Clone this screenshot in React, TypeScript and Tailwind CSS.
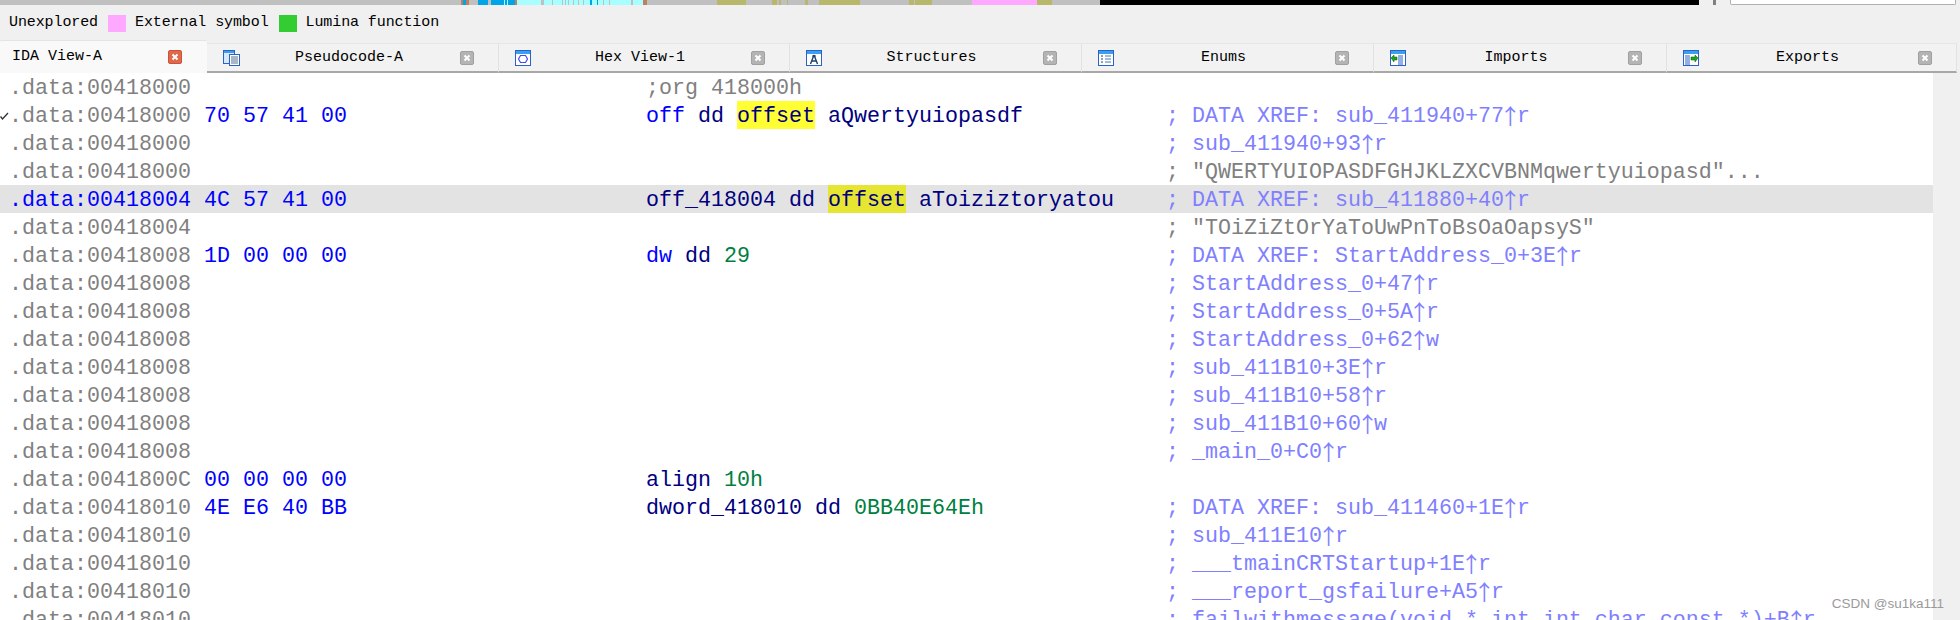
import React from "react";

type Tok = [string, string];
type Row = { addr: string; bytes?: string; asm?: Tok[]; note?: Tok[]; active?: boolean; check?: boolean };

const KEY = "text-[#0000ff]";
const NAVY = "text-[#000080]";
const NUM = "text-[#008040]";
const GRAY = "text-[#808080]";
const CMT = "text-[#8080ff]";

const xref = (s: string): Tok[] => [["; " + s, CMT]];
const str = (s: string): Tok[] => [["; " + s, GRAY]];

const rows: Row[] = [
  { addr: "00418000", asm: [[";org 418000h", GRAY]] },
  {
    addr: "00418000",
    bytes: "70 57 41 00",
    check: true,
    asm: [["off", KEY], [" dd ", NAVY], ["offset", "HL"], [" aQwertyuiopasdf", NAVY]],
    note: xref("DATA XREF: sub_411940+77↑r"),
  },
  { addr: "00418000", note: xref("sub_411940+93↑r") },
  { addr: "00418000", note: str('"QWERTYUIOPASDFGHJKLZXCVBNMqwertyuiopasd"...') },
  {
    addr: "00418004",
    bytes: "4C 57 41 00",
    active: true,
    asm: [["off_418004 dd ", NAVY], ["offset", "HL"], [" aToiziztoryatou", NAVY]],
    note: xref("DATA XREF: sub_411880+40↑r"),
  },
  { addr: "00418004", note: str('"TOiZiZtOrYaToUwPnToBsOaOapsyS"') },
  {
    addr: "00418008",
    bytes: "1D 00 00 00",
    asm: [["dw", KEY], [" dd ", NAVY], ["29", NUM]],
    note: xref("DATA XREF: StartAddress_0+3E↑r"),
  },
  { addr: "00418008", note: xref("StartAddress_0+47↑r") },
  { addr: "00418008", note: xref("StartAddress_0+5A↑r") },
  { addr: "00418008", note: xref("StartAddress_0+62↑w") },
  { addr: "00418008", note: xref("sub_411B10+3E↑r") },
  { addr: "00418008", note: xref("sub_411B10+58↑r") },
  { addr: "00418008", note: xref("sub_411B10+60↑w") },
  { addr: "00418008", note: xref("_main_0+C0↑r") },
  { addr: "0041800C", bytes: "00 00 00 00", asm: [["align ", NAVY], ["10h", NUM]] },
  {
    addr: "00418010",
    bytes: "4E E6 40 BB",
    asm: [["dword_418010 dd ", NAVY], ["0BB40E64Eh", NUM]],
    note: xref("DATA XREF: sub_411460+1E↑r"),
  },
  { addr: "00418010", note: xref("sub_411E10↑r") },
  { addr: "00418010", note: xref("___tmainCRTStartup+1E↑r") },
  { addr: "00418010", note: xref("___report_gsfailure+A5↑r") },
  { addr: "00418010", note: xref("failwithmessage(void *,int,int,char const *)+B↑r") },
];

// navigator band: [x where the segment ends, colour]
const G = "#c0c0c0";
const B = "#00a5e8";
const C = "#a8ffff";
const O = "#b8b86c";
const P = "#ffa8ff";
const R = "#c08060";
const stops: [number, string][] = [
  [461, G], [463, R], [466, B], [469, R], [478, G], [488, B], [491, G], [504, B], [505, C], [507, B], [508, C], [515, B], [517, R],
  [541, C], [544, G], [552, C], [553, G], [562, C], [563, G], [565, C], [566, G], [568, C], [569, G], [573, C], [574, G],
  [578, C], [579, G], [583, C], [584, G], [590, C], [592, B], [597, C], [598, B], [603, C], [604, G], [609, C], [610, G],
  [631, C], [633, G], [643, C], [647, R],
  [717, G], [746, O], [772, G], [777, O], [779, G], [781, O], [787, G], [788, O], [805, G], [808, O], [819, G], [860, O],
  [909, G], [914, O], [915, G], [932, O], [972, G], [1037, P], [1052, O], [1100, G], [1699, "#000000"],
];

const Win = ({ children }: { children: React.ReactNode }) => (
  <svg width="16" height="16" viewBox="0 0 16 16" className="shrink-0">
    <rect x="0.5" y="0.5" width="15" height="15" fill="#fff" stroke="#2a62c8" />
    <rect x="1" y="1" width="14" height="3" fill="#39a0ee" />
    {children}
  </svg>
);

const tabIcons: Record<string, React.ReactNode> = {
  pseudo: (
    <svg width="17" height="16" viewBox="0 0 17 16" className="shrink-0">
      <rect x="0.5" y="0.5" width="11" height="13" fill="#d6e8fb" stroke="#2a62c8" />
      <rect x="1" y="1" width="10" height="2" fill="#39a0ee" />
      <rect x="6.5" y="4.5" width="10" height="11" fill="#fff" stroke="#2a62c8" />
      <path d="M8 7h7M8 9h7M8 11h7M8 13h7" stroke="#50708c" />
    </svg>
  ),
  hex: (
    <Win>
      <path d="M5.5 5.5h5l2 3.5-2 3.5h-5l-2-3.5z" fill="none" stroke="#4848f0" strokeWidth="1.2" />
    </Win>
  ),
  struct: (
    <Win>
      <path d="M8 5l-3.5 9M8 5l3.5 9M5.5 11h5" fill="none" stroke="#20406a" strokeWidth="1.4" />
      <rect x="6.5" y="5" width="3" height="2" fill="#20406a" />
    </Win>
  ),
  enums: (
    <Win>
      <path d="M3 6h2M3 9h2M3 12h2" stroke="#20406a" strokeWidth="1.2" />
      <path d="M7 6h6M7 9h6M7 12h6" stroke="#4878b8" />
    </Win>
  ),
  imports: (
    <Win>
      <path d="M8 6h5M8 8h5M8 10h5M8 12h5M8 14h5" stroke="#2a62c8" />
      <path d="M1 8l3-3v2h3v3H4v2z" fill="#18a818" stroke="#0a500a" strokeWidth="0.5" />
    </Win>
  ),
  exports: (
    <Win>
      <path d="M2 6h5M2 8h5M2 10h5M2 12h5M2 14h5" stroke="#2a62c8" />
      <path d="M15 8l-3-3v2H8v3h4v2z" fill="#18a818" stroke="#0a500a" strokeWidth="0.5" />
    </Win>
  ),
};

const tabs = [
  { name: "Pseudocode-A", icon: "pseudo", w: "w-[292px]" },
  { name: "Hex View-1", icon: "hex", w: "w-[291px]" },
  { name: "Structures", icon: "struct", w: "w-[292px]" },
  { name: "Enums", icon: "enums", w: "w-[292px]" },
  { name: "Imports", icon: "imports", w: "w-[293px]" },
  { name: "Exports", icon: "exports", w: "w-[290px]" },
];

const CloseBtn = ({ on }: { on?: boolean }) => (
  <div
    className={
      "flex h-[14px] w-[14px] shrink-0 items-center justify-center rounded-[2px] border " +
      (on ? "border-[#c8553a] bg-[#e0694c]" : "border-[#a0a0a0] bg-[#b4b4b4]")
    }
  >
    <svg width="8" height="8" viewBox="0 0 8 8">
      <path d="M1.5 1.5l5 5M6.5 1.5l-5 5" stroke="#fff" strokeWidth="2" />
    </svg>
  </div>
);

const Swatch = ({ color }: { color: string }) => <div className={"ml-[10px] mr-[9px] h-[17px] w-[18px] " + color} />;

// the arrow of a cross reference is tall and thin, Liberation Mono's is too small
const Note = ({ text, cls }: { text: string; cls: string }) => {
  const i = text.indexOf("↑");
  if (i < 0) return <span className={cls}>{text}</span>;
  return (
    <span className={cls}>
      {text.slice(0, i)}
      <span className="inline-flex h-[28px] w-[13px] justify-center overflow-visible align-top font-['Noto_Sans_CJK_SC',sans-serif] leading-[28px]">
        ↑
      </span>
      {text.slice(i + 1)}
    </span>
  );
};

export default function App() {
  return (
    <div className="relative flex h-[620px] w-[1960px] flex-col overflow-hidden bg-[#f0f0f0] font-['Liberation_Mono',monospace] text-black">
      {/* navigator band */}
      <div className="flex h-[5px] shrink-0">
        <div className="flex w-[1699px]">
          {stops.map(([end, c], i) => (
            <div key={i} style={{ width: end - (i ? stops[i - 1][0] : 0), backgroundColor: c }} />
          ))}
        </div>
        <div className="ml-[14px] h-[5px] w-[3px] bg-[#808080]" />
        <div className="ml-[14px] h-[5px] w-[226px] rounded-b-[2px] border-x border-b border-[#b0b0b0] bg-white" />
      </div>

      {/* legend */}
      <div className="flex h-[35px] shrink-0 items-center pt-[1px] pl-[9px] text-[15px] tracking-[-0.1px]">
        <span>Unexplored</span>
        <Swatch color="bg-[#ffa8ff]" />
        <span>External symbol</span>
        <Swatch color="bg-[#33cc33]" />
        <span>Lumina function</span>
      </div>

      {/* tabs */}
      <div className="flex h-[33px] shrink-0 items-end text-[15px]">
        <div className="flex h-[33px] w-[207px] shrink-0 items-center justify-between rounded-t-[2px] border-t border-[#e4e4e4] bg-[#f9f9f9] pl-[12px] pr-[25px]">
          <span>IDA View-A</span>
          <CloseBtn on />
        </div>
        {tabs.map((t) => (
          <div
            key={t.name}
            className={
              "flex h-[30px] shrink-0 items-center border-r border-t border-b-2 border-r-[#e2e2e2] border-t-[#e6e6e6] border-b-[#a8a8a8] bg-[#f2f2f2] pl-[16px] pr-[24px] " +
              t.w
            }
          >
            {tabIcons[t.icon]}
            <span className="flex-1 pr-[2px] pt-[2px] text-center">{t.name}</span>
            <CloseBtn />
          </div>
        ))}
      </div>

      {/* listing */}
      <div className="flex min-h-0 flex-1">
        <div className="relative flex-1 bg-white text-[21.67px] leading-[32px] whitespace-pre">
          {rows.map((r, i) => (
            <div key={i} className={"relative flex h-[28px] pl-[9px] " + (r.active ? "bg-[#e3e3e3]" : "")}>
              {r.check && (
                <svg width="9" height="8" viewBox="0 0 9 8" className="absolute left-0 top-[11px]">
                  <path d="M0.5 4.5l2 2.5L8 1" fill="none" stroke="#303030" strokeWidth="1.3" />
                </svg>
              )}
              <div className={"w-[195px] shrink-0 " + (r.active ? KEY : GRAY)}>.data:{r.addr}</div>
              <div className={"w-[442px] shrink-0 " + KEY}>{r.bytes}</div>
              <div className="w-[520px] shrink-0">
                {r.asm?.map(([text, cls], j) =>
                  cls === "HL" ? (
                    <span
                      key={j}
                      className={
                        "inline-block h-[28px] align-top text-[#000080] " +
                        (r.active ? "bg-[#e6e632]" : "bg-[#ffff33]")
                      }
                    >
                      {text}
                    </span>
                  ) : (
                    <span key={j} className={cls}>
                      {text}
                    </span>
                  ),
                )}
              </div>
              <div>
                {r.note?.map(([text, cls], j) => (
                  <Note key={j} text={text} cls={cls} />
                ))}
              </div>
            </div>
          ))}
        </div>
        <div className="w-[27px] shrink-0 bg-[#f0f0f0]" />
      </div>

      <div className="absolute bottom-[7px] right-[16px] font-['Liberation_Sans',sans-serif] text-[13.5px] leading-[18px] text-[#9a9a9a]">
        CSDN @su1ka111
      </div>
    </div>
  );
}
